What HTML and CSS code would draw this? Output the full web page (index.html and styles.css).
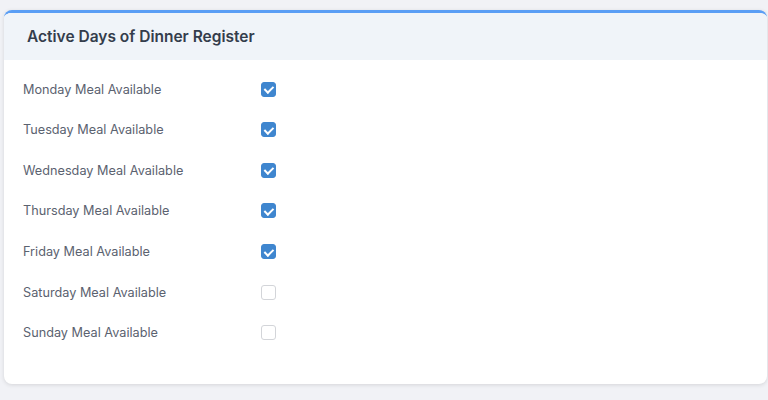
FILE: index.html
```html
<!DOCTYPE html>
<html lang="en">
<head>
  <meta charset="UTF-8" />
  <title>Dinner Register Settings</title>
  <link rel="stylesheet" href="styles.css">
</head>
<body>
  <div class="card">
    <div class="card-header">
      <h3>Active Days of Dinner Register</h3>
    </div>
    <div class="card-body">
      <label class="day-row"><span>Monday Meal Available</span><input type="checkbox" checked><i class="box"></i></label>
      <label class="day-row"><span>Tuesday Meal Available</span><input type="checkbox" checked><i class="box"></i></label>
      <label class="day-row"><span>Wednesday Meal Available</span><input type="checkbox" checked><i class="box"></i></label>
      <label class="day-row"><span>Thursday Meal Available</span><input type="checkbox" checked><i class="box"></i></label>
      <label class="day-row"><span>Friday Meal Available</span><input type="checkbox" checked><i class="box"></i></label>
      <label class="day-row"><span>Saturday Meal Available</span><input type="checkbox"><i class="box"></i></label>
      <label class="day-row"><span>Sunday Meal Available</span><input type="checkbox"><i class="box"></i></label>
    </div>
  </div>
</body>
</html>
```

FILE: styles.css
```css
body {
  font-family: Inter, 'Noto Sans', sans-serif;
  background-color: #f1f2f6;
  margin: 0;
  padding: 10px 1px 16px 4px;
}

.card {
  background-color: #fff;
  border-top: 3px solid #5a9ef5;
  border-radius: 8px;
  box-shadow: 0 1px 4px rgba(0, 0, 0, 0.12);
  overflow: hidden;
}

.card-header {
  background-color: #f0f4f9;
  height: 47px;
  display: flex;
  align-items: center;
  padding: 0 23px;
}

.card-header h3 {
  margin: 0;
  font-size: 15.5px;
  font-weight: 600;
  color: #343d4c;
}

.card-body {
  padding: 8.7px 19px 31px 19px;
}

.day-row {
  display: flex;
  align-items: center;
  height: 40.67px;
  font-size: 12.7px;
  color: #5b6270;
  cursor: pointer;
}

.day-row span {
  width: 238px;
}

.day-row input {
  display: none;
}

.box {
  width: 15px;
  height: 15px;
  box-sizing: border-box;
  border: 1px solid #d3d5d9;
  border-radius: 3px;
  background-color: #fff;
  position: relative;
}

.day-row input:checked + .box {
  background-color: #3f86cf;
  border-color: #3f86cf;
}

.day-row input:checked + .box::after {
  content: "";
  position: absolute;
  left: 4px;
  top: 1.5px;
  width: 3.5px;
  height: 7px;
  border: solid #fff;
  border-width: 0 2px 2px 0;
  transform: rotate(45deg);
}
```
